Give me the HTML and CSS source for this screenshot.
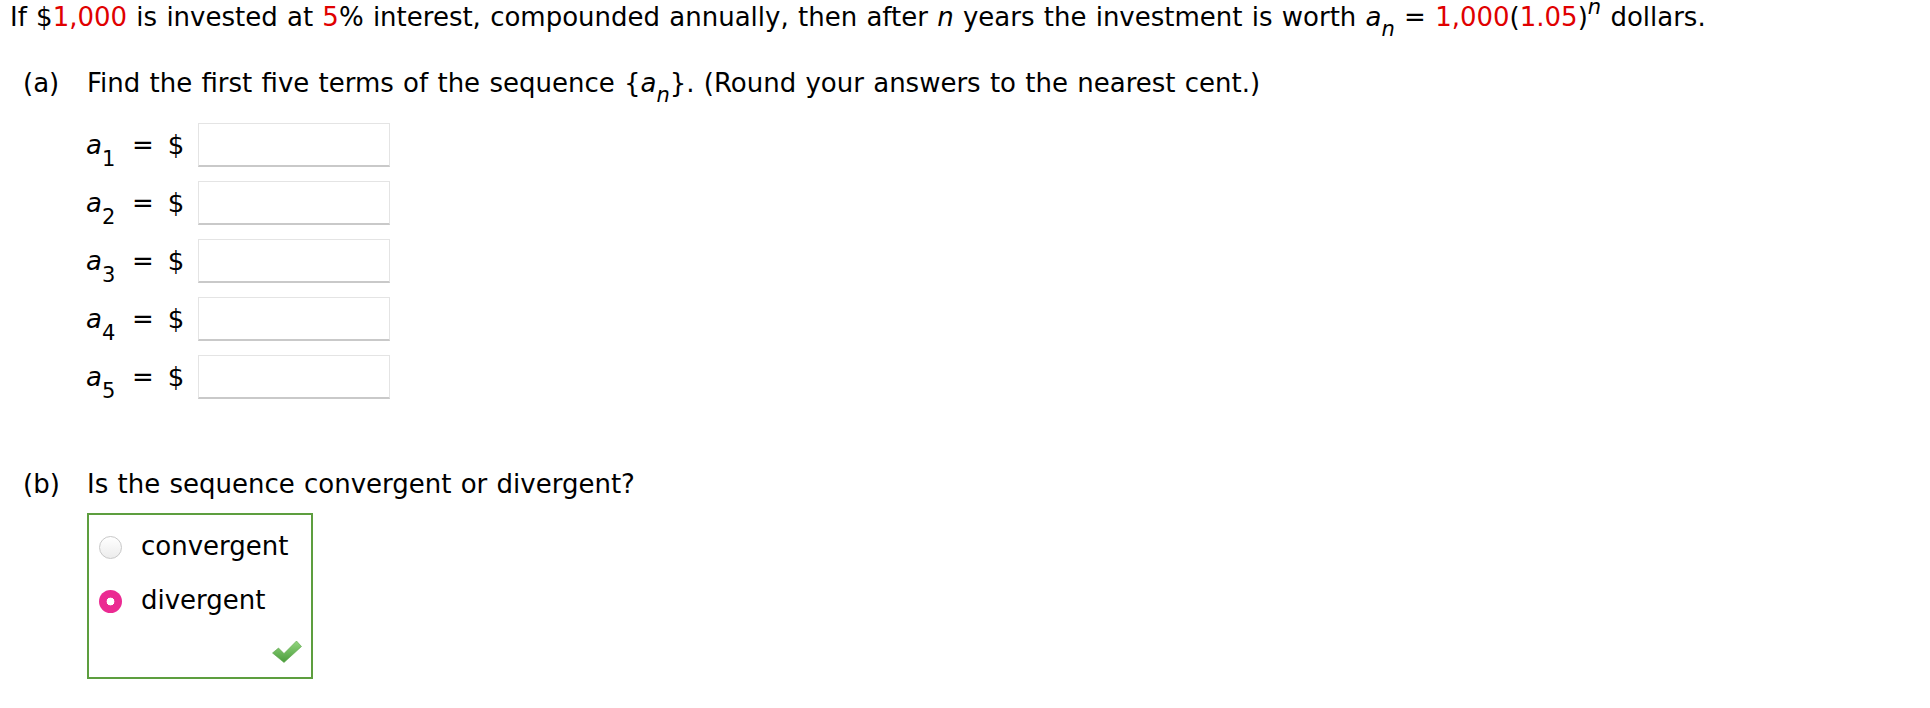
FILE: index.html
```html
<!DOCTYPE html>
<html lang="en">
<head>
<meta charset="utf-8">
<title>Compound interest sequence</title>
<link rel="stylesheet" href="styles.css">
</head>
<body>
<div class="page">
  <p class="intro">If $<span class="red">1,000</span> is invested at <span class="red">5</span>% interest, compounded annually, then after <i>n</i> years the investment is worth <i>a</i><sub class="sub-n"><i>n</i></sub> = <span class="red">1,000</span>(<span class="red">1.05</span>)<sup class="sup-n"><i>n</i></sup> dollars.</p>

  <div class="part part-a">
    <span class="part-label">(a)</span>
    <div class="part-body">
      <p class="question">Find the first five terms of the sequence {<i>a</i><sub class="sub-n"><i>n</i></sub>}. (Round your answers to the nearest cent.)</p>
      <div class="rows">
        <div class="row"><span class="var"><i>a</i><sub class="sub-k">1</sub></span><span class="eq">=</span><span class="dollar">$</span><span class="input"></span></div>
        <div class="row"><span class="var"><i>a</i><sub class="sub-k">2</sub></span><span class="eq">=</span><span class="dollar">$</span><span class="input"></span></div>
        <div class="row"><span class="var"><i>a</i><sub class="sub-k">3</sub></span><span class="eq">=</span><span class="dollar">$</span><span class="input"></span></div>
        <div class="row"><span class="var"><i>a</i><sub class="sub-k">4</sub></span><span class="eq">=</span><span class="dollar">$</span><span class="input"></span></div>
        <div class="row"><span class="var"><i>a</i><sub class="sub-k">5</sub></span><span class="eq">=</span><span class="dollar">$</span><span class="input"></span></div>
      </div>
    </div>
  </div>

  <div class="part part-b">
    <span class="part-label">(b)</span>
    <div class="part-body">
      <p class="question">Is the sequence convergent or divergent?</p>
      <div class="choices">
        <div class="option"><span class="radio"></span><span class="opt-label">convergent</span></div>
        <div class="option"><span class="radio radio-on"></span><span class="opt-label">divergent</span></div>
        <div class="check-wrap">
          <svg class="check" width="30" height="23" viewBox="0 0 30 23">
            <defs>
              <linearGradient id="cg" x1="0" y1="0" x2="0" y2="1">
                <stop offset="0" stop-color="#93d67f"/>
                <stop offset="1" stop-color="#4a9c3b"/>
              </linearGradient>
            </defs>
            <path d="M0.5 13 L6.5 8 L12 13.5 L24.5 1 L29.5 6.5 L12 22.5 Z" fill="url(#cg)" stroke="#5aa548" stroke-width="0.6" stroke-linejoin="round"/>
          </svg>
        </div>
      </div>
    </div>
  </div>
</div>
</body>
</html>
```

FILE: styles.css
```css
html, body {
  margin: 0;
  padding: 0;
  background: #ffffff;
}

body {
  font-family: "DejaVu Sans", Verdana, sans-serif;
  font-size: 26px;
  line-height: 30px;
  word-spacing: 1px;
  color: #000000;
}

.page {
  padding: 2px 0 0 10px;
}

p {
  margin: 0;
}

.red {
  color: #e00000;
}

i {
  font-style: italic;
}

sub, sup {
  line-height: 0;
  font-size: 21px;
}

.sub-n {
  vertical-align: -10px;
}

.sup-n {
  vertical-align: 12px;
}

.sub-k {
  vertical-align: -12px;
  font-size: 21px;
}

.intro {
  white-space: nowrap;
}

.part {
  display: flex;
  margin-left: 13px;
}

.part-label {
  width: 64px;
  flex: 0 0 64px;
}

.part-a {
  margin-top: 36px;
}

.part-b {
  margin-top: 70px;
}

.rows {
  display: flex;
  flex-direction: column;
  gap: 14px;
  margin-top: 25px;
  margin-left: -1px;
}

.row {
  display: flex;
  align-items: center;
  height: 44px;
}

.var {
  width: 46px;
}

.eq {
  margin-right: 14px;
}

.dollar {
  margin-right: 14px;
}

.input {
  width: 192px;
  height: 44px;
  box-sizing: border-box;
  border: 1px solid #e4e4e4;
  border-bottom: 2px solid #c9c9c9;
  background: #ffffff;
}

.choices {
  margin-top: 14px;
  margin-left: 0;
  width: 226px;
  box-sizing: border-box;
  border: 2px solid #5d9e3f;
  padding: 16px 9px 14px 10px;
}

.option {
  display: flex;
  align-items: center;
  height: 30px;
}

.option + .option {
  margin-top: 24px;
}

.radio {
  width: 23px;
  height: 23px;
  box-sizing: border-box;
  border-radius: 50%;
  border: 1px solid #c8c8c8;
  background: linear-gradient(#ffffff, #ececec);
  margin-top: 3px;
  margin-right: 19px;
  flex: 0 0 auto;
}

.radio-on {
  border: none;
  background: radial-gradient(circle, #ffffff 0 3.6px, #eb2a92 4.2px);
}

.check-wrap {
  display: flex;
  justify-content: flex-end;
  margin-top: 25px;
  height: 23px;
}

.check {
  display: block;
}
```
